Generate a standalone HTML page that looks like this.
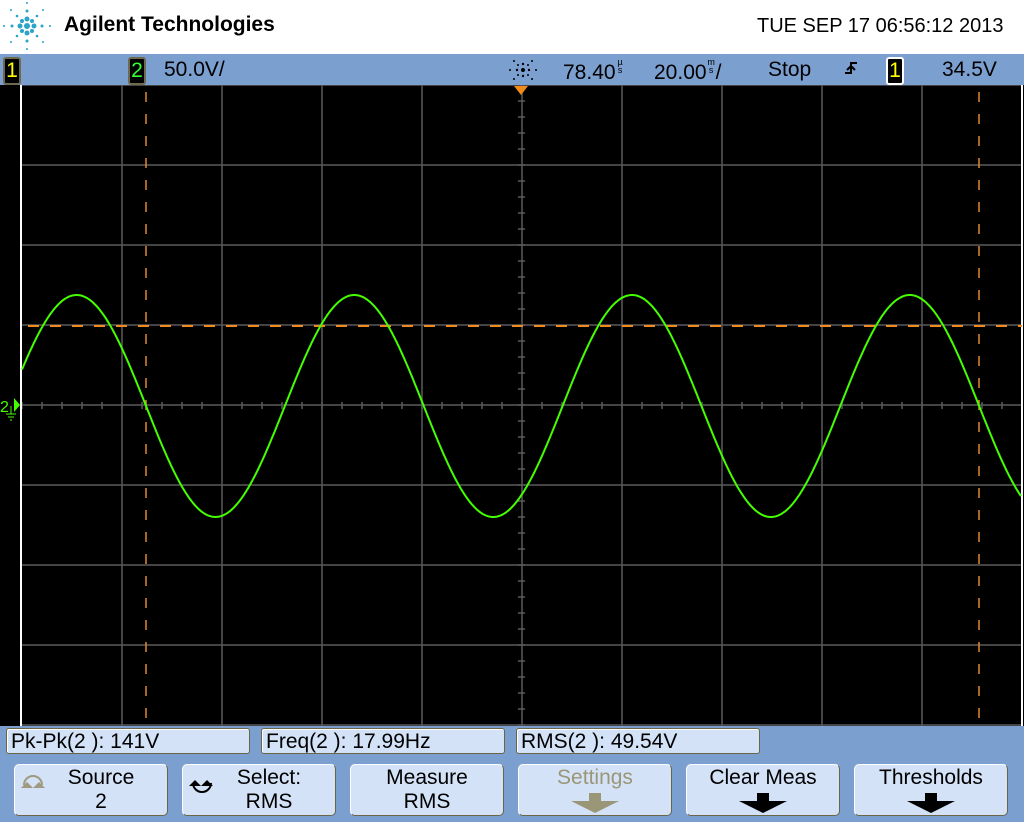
<!DOCTYPE html>
<html><head><meta charset="utf-8"><style>
body{margin:0;width:1024px;height:822px;overflow:hidden;background:#7b9fcf;font-family:"Liberation Sans",sans-serif;position:relative}
.hdr{position:absolute;left:0;top:0;width:1024px;height:54px;background:#fff}
.bar{position:absolute;left:0;top:54px;width:1024px;height:31px;background:#7b9fcf;font-size:21px;color:#000}
.t{position:absolute;white-space:nowrap}
.chip{position:absolute;top:3px;width:14px;height:24px;background:#000;border:2px solid #6d6a4f;border-radius:3px;font-size:21px;text-align:center;line-height:24px}
.meas{position:absolute;top:728px;height:26px;background:#d3e2f6;border:1px solid #6b6548;border-radius:3px;box-shadow:inset 1px 1px 0 #fff;font-size:21px;line-height:26px;padding-left:4px;box-sizing:border-box}
.btn{position:absolute;top:764px;width:154px;height:52px;background:#d3e2f6;border:1px solid #6b6548;border-top-color:#fff;border-left-color:#fff;border-radius:5px;box-sizing:border-box;text-align:center;font-size:21px;line-height:24px}
.arr{position:absolute;left:50%;margin-left:-24px;top:28px}
.u{display:inline-block;font-size:9px;line-height:8px;vertical-align:6px;width:9px;text-align:center}
</style></head><body>
<div class="hdr">
<svg class="t" style="left:0;top:0" width="56" height="52" viewBox="0 0 56 52">
<g fill="#2aa4c8">
<circle cx="27" cy="26" r="3"/>
<circle cx="20" cy="26" r="2.5"/><circle cx="34" cy="26" r="2.5"/><circle cx="27" cy="19" r="2.5"/><circle cx="27" cy="33" r="2.5"/>
<circle cx="22" cy="21" r="2"/><circle cx="32" cy="21" r="2"/><circle cx="22" cy="31" r="2"/><circle cx="32" cy="31" r="2"/>
<circle cx="12" cy="26" r="1.5"/><circle cx="42" cy="26" r="1.5"/><circle cx="27" cy="11" r="1.5"/><circle cx="27" cy="41" r="1.5"/>
<circle cx="17" cy="16" r="1.3"/><circle cx="37" cy="16" r="1.3"/><circle cx="17" cy="36" r="1.3"/><circle cx="37" cy="36" r="1.3"/>
<circle cx="4" cy="26" r="1"/><circle cx="50" cy="26" r="1"/><circle cx="27" cy="3" r="1"/><circle cx="27" cy="49" r="1"/>
<circle cx="11" cy="10" r="1"/><circle cx="43" cy="10" r="1"/><circle cx="11" cy="42" r="1"/><circle cx="43" cy="42" r="1"/>
</g></svg>
<div class="t" style="left:64px;top:13px;font-size:21px;font-weight:bold">Agilent Technologies</div>
<div class="t" style="left:757px;top:15px;font-size:20px">TUE SEP 17 06:56:12 2013</div>
</div>
<div class="bar">
<div class="chip" style="left:3px;color:#ff0">1</div>
<div class="chip" style="left:128px;color:#3f3">2</div>
<div class="t" style="left:164px;top:4px">50.0V/</div>
<svg class="t" style="left:505px;top:2px" width="36" height="28"><g fill="#000"><circle cx="18" cy="14" r="2"/><circle cx="12" cy="14" r="1.2"/><circle cx="24" cy="14" r="1.2"/><circle cx="18" cy="8" r="1.2"/><circle cx="18" cy="20" r="1.2"/><circle cx="13" cy="9" r="1"/><circle cx="23" cy="9" r="1"/><circle cx="13" cy="19" r="1"/><circle cx="23" cy="19" r="1"/><circle cx="5" cy="14" r="1"/><circle cx="31" cy="14" r="1"/><circle cx="9" cy="5" r="1"/><circle cx="27" cy="5" r="1"/><circle cx="9" cy="23" r="1"/><circle cx="27" cy="23" r="1"/></g></svg>
<div class="t" style="left:563px;top:4px">78.40<span class="u">µ<br>s</span></div>
<div class="t" style="left:654px;top:4px">20.00<span class="u">m<br>s</span>/</div>
<div class="t" style="left:768px;top:4px">Stop</div>
<svg class="t" style="left:844px;top:7px" width="14" height="18"><path d="M1 12H7V2H13M3 9L7 5L11 9" fill="none" stroke="#000" stroke-width="2"/></svg>
<div class="chip" style="left:886px;color:#ff0;border-color:#fff">1</div>
<div class="t" style="left:942px;top:4px">34.5V</div>
</div>
<svg id="sc" style="position:absolute;left:0;top:85px" width="1024" height="641" viewBox="0 85 1024 641">
<rect x="0" y="85" width="1024" height="641" fill="#000"/>
<g id="grid" stroke="#5a5a5a" stroke-width="1.5"></g>
<line x1="21" y1="85" x2="21" y2="726" stroke="#fff" stroke-width="2"/>
<line x1="1022" y1="85" x2="1022" y2="726" stroke="#fff" stroke-width="2"/>
<line x1="22" y1="326" x2="1022" y2="326" stroke="#f08a1c" stroke-width="2" stroke-dasharray="11 11" stroke-dashoffset="-6"/>
<line x1="146" y1="92" x2="146" y2="726" stroke="#e08a30" stroke-width="1.5" stroke-dasharray="10 12"/>
<line x1="979" y1="92" x2="979" y2="726" stroke="#e08a30" stroke-width="1.5" stroke-dasharray="10 12"/>
<polygon points="514,86 528,86 521,95" fill="#f08a1c"/>
<path id="wave" fill="none" stroke="#44ff00" stroke-width="2"/>
<text x="0" y="412" fill="#44ff00" font-size="16" font-family="Liberation Sans">2</text>
<polygon points="14,398 20,405 14,412" fill="#44ff00"/>
<path d="M11 406v8M6 414h10M8 417h6M10 420h2" stroke="#44ff00" stroke-width="1" fill="none"/>
</svg>
<script>
var g=document.getElementById('grid'),s='';
for(var x=122;x<1022;x+=100)s+='<line x1="'+x+'" y1="85" x2="'+x+'" y2="726"/>';
for(var y=85;y<=725;y+=80)s+='<line x1="22" y1="'+y+'" x2="1022" y2="'+y+'"/>';
for(var x=22;x<1022;x+=20)s+='<line x1="'+x+'" y1="402" x2="'+x+'" y2="409"/>';
for(var y=85;y<726;y+=16)s+='<line x1="518" y1="'+y+'" x2="525" y2="'+y+'"/>';
g.innerHTML=s;
var d='',P=277.7,x0=7.2;
for(var x=22;x<=1021;x++){var yy=406-111*Math.sin(2*Math.PI*(x-x0)/P);d+=(x==22?'M':'L')+x+' '+yy.toFixed(1);}
document.getElementById('wave').setAttribute('d',d);
</script>
<div class="meas" style="left:6px;width:244px">Pk-Pk(2 ): 141V</div>
<div class="meas" style="left:261px;width:244px">Freq(2 ): 17.99Hz</div>
<div class="meas" style="left:516px;width:244px">RMS(2 ): 49.54V</div>
<div class="btn" style="left:14px"><svg style="position:absolute;left:4px;top:6px" width="30" height="24"><path d="M5 14a9 9 0 1 1 18 0" fill="none" stroke="#a09a80" stroke-width="2"/><polygon points="2,17 8,11 14,17" fill="#a09a80"/><polygon points="14,17 20,11 26,17" fill="#a09a80"/></svg><div style="padding-left:20px;padding-top:1px">Source<br>2</div></div>
<div class="btn" style="left:182px"><svg style="position:absolute;left:4px;top:6px" width="30" height="26"><path d="M6 12a9 9 0 1 0 18 0" fill="none" stroke="#000" stroke-width="2"/><polygon points="2,15 8,9 14,15" fill="#000"/><polygon points="14,15 20,9 26,15" fill="#000"/></svg><div style="padding-left:20px;padding-top:1px">Select:<br>RMS</div></div>
<div class="btn" style="left:350px"><div style="padding-top:1px">Measure<br>RMS</div></div>
<div class="btn" style="left:518px;color:#9a9678"><div style="padding-top:1px">Settings</div><svg class="arr" width="48" height="20"><polygon points="18,0 30,0 30,8 48,8 24,20 0,8 18,8" fill="#9a9678"/></svg></div>
<div class="btn" style="left:686px"><div style="padding-top:1px">Clear Meas</div><svg class="arr" width="48" height="20"><polygon points="18,0 30,0 30,8 48,8 24,20 0,8 18,8" fill="#000"/></svg></div>
<div class="btn" style="left:854px"><div style="padding-top:1px">Thresholds</div><svg class="arr" width="48" height="20"><polygon points="18,0 30,0 30,8 48,8 24,20 0,8 18,8" fill="#000"/></svg></div>
</body></html>
